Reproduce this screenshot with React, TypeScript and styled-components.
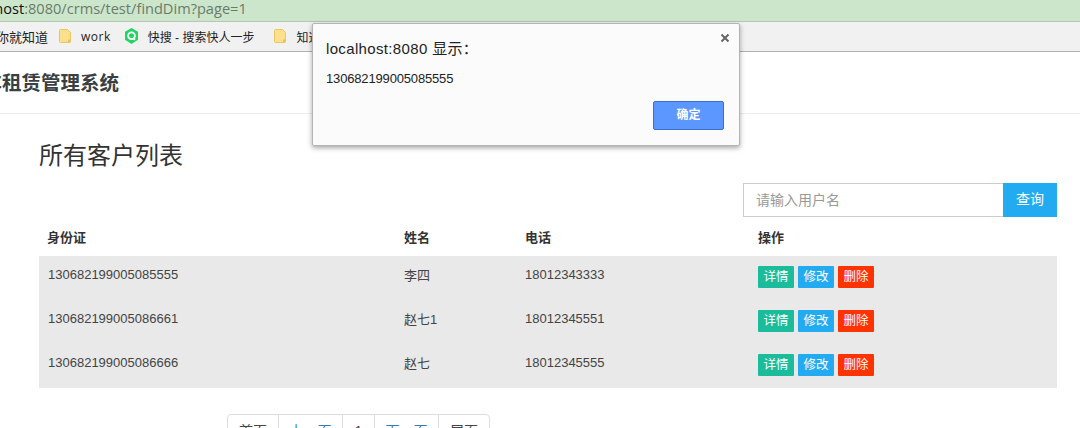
import React from "react";
import styled, { createGlobalStyle } from "styled-components";

const cjk = `"Liberation Sans", "Noto Sans CJK SC", sans-serif`;

const Global = createGlobalStyle`
  html, body { margin: 0; padding: 0; background: #fff; }
  body { width: 1080px; height: 428px; overflow: hidden; font-family: ${cjk}; color: #333; }
  * { box-sizing: border-box; }
`;

const Screen = styled.div`
  position: relative;
  width: 1080px;
  height: 428px;
  overflow: hidden;
  display: flex;
  flex-direction: column;
`;

const UrlBar = styled.div`
  height: 22px;
  flex: none;
  background: #cce6cc;
  border-bottom: 1px solid #b5c6b5;
  color: #6b7b6b;
  font-family: "Open Sans", "Liberation Sans", sans-serif;
  font-size: 14.6px;
  line-height: 16px;
  white-space: nowrap;
  overflow: hidden;
`;

const UrlText = styled.div`
  margin-left: -37px;
`;

const UrlHost = styled.span`
  color: #111;
`;

const Bookmarks = styled.div`
  height: 30px;
  flex: none;
  background: #f1f1f1;
  border-bottom: 1px solid #b0b0b0;
  display: flex;
  align-items: center;
  font-size: 12px;
  color: #222;
  white-space: nowrap;
  overflow: hidden;
  padding-bottom: 1px;
`;

const Mark = styled.span<{ $gap: number; $inner?: number }>`
  display: inline-flex;
  align-items: center;
  margin-left: ${(p) => p.$gap}px;
  gap: ${(p) => p.$inner ?? 10}px;
  flex: none;
`;

const Cut = styled.span`
  margin-left: -4px;
  font-size: 13px;
`;

const Work = styled.span`
  font-family: "Open Sans", sans-serif;
  font-size: 12px;
  letter-spacing: 0.5px;
`;

const Folder = () => (
  <svg width="12" height="14" viewBox="0 0 12 14">
    <path d="M.5 1.5a1 1 0 0 1 1-1h7l3 3v9a1 1 0 0 1-1 1h-9a1 1 0 0 1-1-1z" fill="#fde08e" stroke="#eec660" />
    <rect x="9" y="10.5" width="2.5" height="3" fill="#e9c25a" />
  </svg>
);

const Qihoo = () => (
  <svg width="15" height="16" viewBox="0 0 15 16">
    <path d="M7.5 0 14 3.7v8.1L7.5 16 1 11.8V3.7z" fill="#1ed760" />
    <circle cx="7.5" cy="7.8" r="3.4" fill="none" stroke="#fff" strokeWidth="1.8" />
    <path d="m9 9.8 2 2" stroke="#fff" strokeWidth="1.8" />
  </svg>
);

const Navbar = styled.div`
  height: 62px;
  flex: none;
  border-bottom: 1px solid #eee;
  display: flex;
  align-items: center;
  overflow: hidden;
  font-size: 19.5px;
  font-weight: 700;
  color: #3a3f44;
  white-space: nowrap;
  padding-bottom: 2px;
`;

const Brand = styled.div`
  margin-left: -37px;
`;

const Content = styled.main`
  padding: 0 23px 0 39px;
  display: flex;
  flex-direction: column;
`;

const Title = styled.h2`
  margin: 25px 0 0;
  font-size: 24px;
  line-height: 34px;
  font-weight: 400;
  color: #333;
`;

const SearchRow = styled.div`
  display: flex;
  justify-content: flex-end;
  margin-top: 10px;
`;

const SearchInput = styled.div`
  width: 260px;
  height: 34px;
  border: 1px solid #ccc;
  border-right: none;
  padding-left: 12px;
  font-size: 14px;
  line-height: 32px;
  color: #999;
`;

const SearchButton = styled.div`
  width: 54px;
  height: 34px;
  background: #23abf2;
  color: #fff;
  font-size: 14px;
  line-height: 33px;
  text-align: center;
`;

const Table = styled.table`
  width: 1018px;
  border-collapse: collapse;
  table-layout: fixed;
  margin-top: 5px;
  font-size: 13px;
`;

const Th = styled.th<{ $w?: number }>`
  width: ${(p) => (p.$w ? `${p.$w}px` : "auto")};
  height: 34px;
  padding: 7px 8px 10px;
  font-weight: 700;
  text-align: left;
  color: #333;
  line-height: 17px;
`;

const Row = styled.tr`
  background: #e9e9e9;
`;

const Td = styled.td`
  height: 44px;
  padding: 0 8px 8px;
  vertical-align: middle;
  color: #444;
  &:first-child { padding-left: 9px; }
`;

const ActionTd = styled.td`
  height: 44px;
  padding: 0 8px 2px;
  vertical-align: middle;
`;

const Actions = styled.div`
  display: flex;
  gap: 4px;
`;

const ActionBtn = styled.span<{ $bg: string }>`
  width: 36px;
  height: 22px;
  background: ${(p) => p.$bg};
  border-radius: 1px;
  color: #fff;
  font-size: 12.5px;
  line-height: 22px;
  text-align: center;
`;

const Pager = styled.ul`
  list-style: none;
  display: flex;
  margin: 26px 0 0 188px;
  padding: 0;
  font-size: 14px;
  line-height: 20px;
`;

const PageItem = styled.li<{ $w: number; $link?: boolean }>`
  width: ${(p) => p.$w}px;
  height: 34px;
  margin-left: -1px;
  border: 1px solid #ddd;
  padding-top: 6px;
  text-align: center;
  background: #fff;
  color: ${(p) => (p.$link ? "#337ab7" : "#444")};
  &:first-child { margin-left: 0; border-radius: 4px 0 0 4px; }
  &:last-child { border-radius: 0 4px 4px 0; }
`;

const Dialog = styled.div`
  position: absolute;
  left: 312px;
  top: 23px;
  width: 428px;
  height: 123px;
  background: #fbfbfb;
  border: 1px solid #b4b4b4;
  border-radius: 2px;
  box-shadow: 0 2px 5px rgba(0, 0, 0, 0.35);
  padding: 15px 15px 0 13px;
  display: flex;
  flex-direction: column;
`;

const DialogTitle = styled.div`
  font-size: 15px;
  letter-spacing: 0.35px;
  line-height: 20px;
  color: #222;
`;

const DialogClose = styled.svg`
  position: absolute;
  right: 9px;
  top: 9px;
`;

const DialogMsg = styled.div`
  margin-top: 11px;
  font-size: 13px;
  letter-spacing: -0.16px;
  line-height: 18px;
  color: #222;
`;

const DialogFoot = styled.div`
  display: flex;
  justify-content: flex-end;
  margin-top: 13px;
`;

const OkButton = styled.div`
  width: 71px;
  height: 29px;
  background: #5c97ff;
  border: 1px solid #3a6fd0;
  border-radius: 2px;
  color: #fff;
  font-size: 12px;
  font-weight: 700;
  line-height: 27px;
  text-align: center;
`;

const rows = [
  ["130682199005085555", "李四", "18012343333"],
  ["130682199005086661", "赵七1", "18012345551"],
  ["130682199005086666", "赵七", "18012345555"],
];

export default function App() {
  return (
    <Screen>
      <Global />
      <UrlBar>
        <UrlText>
          <UrlHost>localhost</UrlHost>:8080/crms/test/findDim?page=1
        </UrlText>
      </UrlBar>
      <Bookmarks>
        <Cut>你就知道</Cut>
        <Mark $gap={11}><Folder /><Work>work</Work></Mark>
        <Mark $gap={13} $inner={9}><Qihoo /><span>快搜 - 搜索快人一步</span></Mark>
        <Mark $gap={20}><Folder /><span>知道</span></Mark>
      </Bookmarks>
      <Navbar><Brand>汽车租赁管理系统</Brand></Navbar>
      <Content>
        <Title>所有客户列表</Title>
        <SearchRow>
          <SearchInput>请输入用户名</SearchInput>
          <SearchButton>查询</SearchButton>
        </SearchRow>
        <Table>
          <thead>
            <tr>
              <Th $w={357}>身份证</Th>
              <Th $w={121}>姓名</Th>
              <Th $w={233}>电话</Th>
              <Th>操作</Th>
            </tr>
          </thead>
          <tbody>
            {rows.map((r) => (
              <Row key={r[0]}>
                <Td>{r[0]}</Td>
                <Td>{r[1]}</Td>
                <Td>{r[2]}</Td>
                <ActionTd>
                  <Actions>
                    <ActionBtn $bg="#1abc9c">详情</ActionBtn>
                    <ActionBtn $bg="#23abf2">修改</ActionBtn>
                    <ActionBtn $bg="#ff3300">删除</ActionBtn>
                  </Actions>
                </ActionTd>
              </Row>
            ))}
          </tbody>
        </Table>
        <Pager>
          <PageItem $w={52}>首页</PageItem>
          <PageItem $w={65} $link>上一页</PageItem>
          <PageItem $w={33}>1</PageItem>
          <PageItem $w={65} $link>下一页</PageItem>
          <PageItem $w={52}>尾页</PageItem>
        </Pager>
      </Content>
      <Dialog>
        <DialogTitle>localhost:8080 显示：</DialogTitle>
        <DialogClose width="10" height="10" viewBox="0 0 10 10">
          <path d="M1.5 1.5l7 7M8.5 1.5l-7 7" stroke="#666" strokeWidth="2" />
        </DialogClose>
        <DialogMsg>130682199005085555</DialogMsg>
        <DialogFoot><OkButton>确定</OkButton></DialogFoot>
      </Dialog>
    </Screen>
  );
}
